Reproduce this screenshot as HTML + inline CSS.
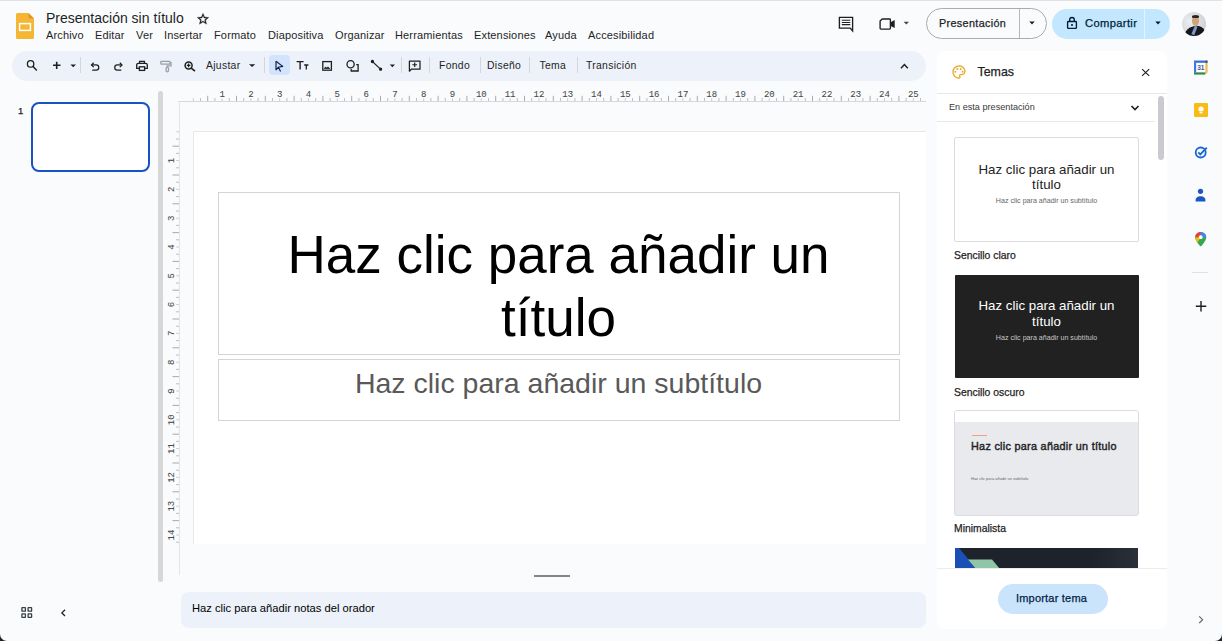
<!DOCTYPE html>
<html><head><meta charset="utf-8">
<style>
html,body{margin:0;padding:0;}
html{background:#1b2430;}
body{width:1222px;height:641px;position:relative;overflow:hidden;background:#f9fbfd;font-family:"Liberation Sans",sans-serif;color:#1f1f1f;border-radius:0 0 7px 7px;}
.a{position:absolute;white-space:nowrap;line-height:1;}
svg{position:absolute;display:block;}
#topline{position:absolute;left:0;top:0;width:1222px;height:1px;background:#dfe1e3;}
.menu{font-size:11px;letter-spacing:0.15px;color:#1f1f1f;}
.tb{font-size:10.4px;letter-spacing:0.3px;color:#1f1f1f;}
.div{position:absolute;width:1px;background:#d3d7dc;}
.med{-webkit-text-stroke:0.25px currentColor;}
</style></head><body>
<div id="topline"></div>

<!-- logo -->
<svg style="left:16px;top:13px" width="18" height="26" viewBox="0 0 18 26">
  <path d="M1.5 0h11L18 5.5V24.5a1.5 1.5 0 0 1-1.5 1.5H1.5A1.5 1.5 0 0 1 0 24.5V1.5A1.5 1.5 0 0 1 1.5 0z" fill="#f5b634"/>
  <path d="M12.5 0L18 5.5h-4a1.5 1.5 0 0 1-1.5-1.5z" fill="#e0962a"/>
  <rect x="3.6" y="10.6" width="10.8" height="6.8" fill="none" stroke="#fff" stroke-width="1.5"/>
</svg>

<div class="a" style="left:46px;top:11px;font-size:14px;color:#1f1f1f">Presentación sin título</div>
<!-- star -->
<svg style="left:195.5px;top:11.8px" width="14" height="14" viewBox="0 0 24 24"><path d="M22 9.24l-7.19-.62L12 2 9.19 8.63 2 9.24l5.46 4.73L5.82 21 12 17.27 18.18 21l-1.63-7.03L22 9.24zM12 15.4l-3.76 2.27 1-4.28-3.32-2.88 4.38-.38L12 6.1l1.71 4.04 4.38.38-3.32 2.88 1 4.28L12 15.4z" fill="#1f1f1f" stroke="#1f1f1f" stroke-width="0.5"/></svg>

<div class="a menu" style="left:46px;top:29.6px">Archivo</div>
<div class="a menu" style="left:95px;top:29.6px">Editar</div>
<div class="a menu" style="left:136px;top:29.6px">Ver</div>
<div class="a menu" style="left:164px;top:29.6px">Insertar</div>
<div class="a menu" style="left:214px;top:29.6px">Formato</div>
<div class="a menu" style="left:268px;top:29.6px">Diapositiva</div>
<div class="a menu" style="left:335px;top:29.6px">Organizar</div>
<div class="a menu" style="left:395px;top:29.6px">Herramientas</div>
<div class="a menu" style="left:474px;top:29.6px">Extensiones</div>
<div class="a menu" style="left:545px;top:29.6px">Ayuda</div>
<div class="a menu" style="left:588px;top:29.6px">Accesibilidad</div>

<!-- top right -->
<svg style="left:0;top:0" width="1222" height="641" viewBox="0 0 1222 641" fill="none">
  <path d="M839.4 17.3H852.6V31L850.2 28.1H839.4Z" stroke="#1f1f1f" stroke-width="1.35" stroke-linejoin="miter"/>
  <path d="M841.8 20.3H850.3M841.8 22.5H850.3M841.8 24.6H850.3" stroke="#1f1f1f" stroke-width="1.1"/>
  <path d="M882.2 19H889.6A0.8 0.8 0 0 1 890.4 19.8V28.3A0.8 0.8 0 0 1 889.6 29.1H880.9A0.8 0.8 0 0 1 880.1 28.3V21.1Z" stroke="#1f1f1f" stroke-width="1.35" stroke-linejoin="round"/>
  <path d="M890.6 22.3L894.7 20.1V28.1L890.6 25.9Z" fill="#1f1f1f"/>
  <path d="M903.6 21.8h5.4l-2.7 2.8z" fill="#444746"/>
</svg>
<div style="position:absolute;left:926px;top:8px;width:119px;height:29px;border:1px solid #a9acaa;border-radius:16px;box-sizing:content-box"></div>
<div style="position:absolute;left:1019px;top:9px;width:1px;height:29px;background:#b5b8b6"></div>
<div class="a med" style="left:939px;top:17.6px;font-size:10.8px;letter-spacing:0.35px;color:#1f1f1f">Presentación</div>
<svg style="left:1028px;top:20px" width="8" height="6" viewBox="0 0 8 6"><path d="M1.3 1.5h5.4L4 4.4z" fill="#1f1f1f"/></svg>

<div style="position:absolute;left:1052px;top:8.5px;width:118px;height:30px;background:#c2e7ff;border-radius:15px"></div>
<div style="position:absolute;left:1144px;top:8.5px;width:1px;height:30px;background:#e3f2fd"></div>
<svg style="left:1066px;top:16px" width="12" height="14" viewBox="0 0 12 14">
  <rect x="1.6" y="5.5" width="8.8" height="6.9" rx="0.7" fill="none" stroke="#001d35" stroke-width="1.35"/>
  <path d="M3.7 5.5V3.8a2.3 2.3 0 0 1 4.6 0v1.7" fill="none" stroke="#001d35" stroke-width="1.35"/>
  <circle cx="6" cy="9" r="1.05" fill="#001d35"/>
</svg>
<div class="a med" style="left:1085px;top:17.9px;font-size:11.2px;letter-spacing:0.35px;color:#001d35">Compartir</div>
<svg style="left:1153.5px;top:20px" width="8" height="6" viewBox="0 0 8 6"><path d="M1.3 1.5h5.4L4 4.4z" fill="#001d35"/></svg>

<!-- avatar -->
<div style="position:absolute;left:1182.3px;top:11.6px;width:24px;height:24px;border-radius:50%;overflow:hidden;background:radial-gradient(circle at 35% 40%,#eceef0 0,#d3d5d9 65%,#b8bbc0 100%)">
  <div style="position:absolute;left:3px;top:14.5px;width:20px;height:14px;border-radius:50% 50% 0 0;background:#14181e;transform:rotate(-12deg)"></div>
  <div style="position:absolute;left:10.8px;top:14.2px;width:3.2px;height:9px;background:#7d98c4;transform:rotate(22deg)"></div>
  <div style="position:absolute;left:9.8px;top:4.4px;width:7px;height:9.6px;border-radius:48% 48% 50% 50%;background:#cfa67c"></div>
  <div style="position:absolute;left:9.6px;top:3.4px;width:7.4px;height:3.2px;border-radius:50% 50% 25% 25%;background:#2a231f"></div>
</div>
<!-- toolbar -->
<div style="position:absolute;left:12px;top:51px;width:914px;height:30px;background:#edf2fa;border-radius:15px"></div>
<div style="position:absolute;left:268.5px;top:55px;width:21px;height:19.5px;background:#d3e3fd;border-radius:4px"></div>

<div id="tbicons"><svg style="left:0;top:0" width="1222" height="641" viewBox="0 0 1222 641" fill="none" stroke="#1f1f1f" stroke-width="1.5">
<!-- search -->
<circle cx="30.6" cy="63.9" r="3.2" stroke-width="1.3"/>
<path d="M32.9 66.3L36.8 70.5" stroke-width="1.4"/>
<!-- plus -->
<path d="M56.7 61.7V68.9M53 65.3H60.5" stroke-width="1.6"/>
<path d="M70.4 64.6h5.6l-2.8 2.6z" fill="#1f1f1f" stroke="none"/>
<!-- undo -->
<path d="M91.6 64.9H96.2a2.55 2.55 0 0 1 0 5.1H92.2" stroke-width="1.25"/>
<path d="M93.7 62.7L91.5 64.9L93.7 67.1" stroke-width="1.25"/>
<!-- redo -->
<path d="M121.9 64.9H117.3a2.55 2.55 0 0 0 0 5.1H121.3" stroke-width="1.25"/>
<path d="M119.8 62.7L122 64.9L119.8 67.1" stroke-width="1.25"/>
<!-- print -->
<path d="M139.6 63.3V61.3H144.4V63.3" stroke-width="1.3"/>
<path d="M139.4 68.3H136.7V65.1A1.8 1.8 0 0 1 138.5 63.3H145.5A1.8 1.8 0 0 1 147.3 65.1V68.3H144.6" stroke-width="1.3"/>
<rect x="139.4" y="66.8" width="5.2" height="3.6" stroke-width="1.3"/>
<!-- paint format -->
<g stroke="#9aa0a6" stroke-width="1.3">
<rect x="160.8" y="61.3" width="9.2" height="2.8" rx="0.6"/>
<path d="M170 62.7H171V65.8H167.3V67.2"/>
<rect x="166.1" y="67.2" width="2.4" height="4.6" rx="1.2"/>
</g>
<!-- zoom in -->
<circle cx="188.6" cy="65.4" r="3.5" stroke-width="1.5"/>
<path d="M191.2 68.1L195 71.2" stroke-width="1.6"/>
<path d="M188.6 63.6V67.2M186.8 65.4H190.4" stroke-width="1.3"/>
<path d="M249 64.3h6.2l-3.1 2.6z" fill="#1f1f1f" stroke="none"/>
<!-- cursor -->
<path d="M276 61.3V69.8L278.4 67.2L280.6 71.6M278.4 67.2L282.7 66.4Z" stroke="#041e49" stroke-width="1.15" stroke-linejoin="round"/>
<path d="M276 61.3L282.7 66.4" stroke="#041e49" stroke-width="1.15"/>
<!-- Tt -->
<path d="M296.6 61.6H303.6M300.1 61.6V69.6" stroke-width="1.4"/>
<path d="M304.2 65H308.4M306.3 65V69.6" stroke-width="1.3"/>
<!-- image -->
<rect x="322.8" y="61.6" width="8.6" height="8.6" stroke-width="1.3"/>
<path d="M324.3 68.5L325.6 67L326.8 68.1L327.8 66.9L329.8 68.5Z" fill="#1f1f1f" stroke-width="0.8"/>
<!-- shape -->
<circle cx="350.6" cy="64.2" r="3.6" stroke-width="1.3"/>
<path d="M356.3 64.6H358.1V71H351.2V68.9" stroke-width="1.3"/>
<!-- line -->
<path d="M372.5 61.6L380.5 69.1" stroke-width="1.25"/>
<circle cx="372.4" cy="61.5" r="0.9" fill="#1f1f1f"/>
<circle cx="380.6" cy="69.2" r="0.9" fill="#1f1f1f"/>
<path d="M389.8 64.6h5.2l-2.6 2.6z" fill="#1f1f1f" stroke="none"/>
<!-- comment add -->
<path d="M409.4 71.2V61H420V69.2H411.4Z" stroke-width="1.25" stroke-linejoin="round"/>
<path d="M414.7 62.4V67.1M412.35 64.75H417.05" stroke-width="1.2"/>
<!-- collapse chevron -->
<path d="M901 68.2L904.4 64.6L907.8 68.2" stroke-width="1.5"/>
</svg>
</div>

<div class="div" style="left:80px;top:57px;height:16px"></div>
<div class="div" style="left:264px;top:57px;height:16px"></div>
<div class="div" style="left:401px;top:57px;height:16px"></div>
<div class="div" style="left:429px;top:57px;height:16px"></div>
<div class="div" style="left:480px;top:57px;height:16px"></div>
<div class="div" style="left:529px;top:57px;height:16px"></div>
<div class="div" style="left:577px;top:57px;height:16px"></div>

<div class="a tb" style="left:206px;top:61px">Ajustar</div>
<div class="a tb" style="left:439px;top:61px">Fondo</div>
<div class="a tb" style="left:487px;top:61px">Diseño</div>
<div class="a tb" style="left:539.5px;top:61px">Tema</div>
<div class="a tb" style="left:586px;top:61px">Transición</div>

<!-- filmstrip -->
<div class="a med" style="left:18px;top:106.4px;font-size:9.6px;color:#1f1f1f">1</div>
<div style="position:absolute;left:31px;top:102px;width:114.5px;height:65.5px;border:2px solid #1a52c2;border-radius:8px;background:#fff"></div>
<div style="position:absolute;left:158px;top:90.5px;width:5px;height:491px;background:#d6d7d9;border-radius:3px"></div>

<!-- canvas -->
<div style="position:absolute;left:193px;top:131px;width:733px;height:412.5px;background:#fff;border-top:1px solid #e8e8e8;border-left:1px solid #e8e8e8;box-sizing:border-box"></div>
<div id="ruler"><svg style="left:0;top:0" width="1222" height="641" viewBox="0 0 1222 641">
<rect x="178" y="101" width="748" height="1" fill="#d5d8dc"/>
<rect x="179" y="101" width="1" height="474" fill="#e3e5e8"/>
<path d="M200.50 98V101 M214.90 98V101 M229.30 98V101 M243.70 98V101 M258.10 98V101 M272.50 98V101 M286.90 98V101 M301.30 98V101 M315.70 98V101 M330.10 98V101 M344.50 98V101 M358.90 98V101 M373.30 98V101 M387.70 98V101 M402.10 98V101 M416.50 98V101 M430.90 98V101 M445.30 98V101 M459.70 98V101 M474.10 98V101 M488.50 98V101 M502.90 98V101 M517.30 98V101 M531.70 98V101 M546.10 98V101 M560.50 98V101 M574.90 98V101 M589.30 98V101 M603.70 98V101 M618.10 98V101 M632.50 98V101 M646.90 98V101 M661.30 98V101 M675.70 98V101 M690.10 98V101 M704.50 98V101 M718.90 98V101 M733.30 98V101 M747.70 98V101 M762.10 98V101 M776.50 98V101 M790.90 98V101 M805.30 98V101 M819.70 98V101 M834.10 98V101 M848.50 98V101 M862.90 98V101 M877.30 98V101 M891.70 98V101 M906.10 98V101 M920.50 98V101 M176 139.00H179 M176 153.40H179 M176 167.80H179 M176 182.20H179 M176 196.60H179 M176 211.00H179 M176 225.40H179 M176 239.80H179 M176 254.20H179 M176 268.60H179 M176 283.00H179 M176 297.40H179 M176 311.80H179 M176 326.20H179 M176 340.60H179 M176 355.00H179 M176 369.40H179 M176 383.80H179 M176 398.20H179 M176 412.60H179 M176 427.00H179 M176 441.40H179 M176 455.80H179 M176 470.20H179 M176 484.60H179 M176 499.00H179 M176 513.40H179 M176 527.80H179 M176 542.20H179" stroke="#b4b8bc" stroke-width="0.9" fill="none"/>
<path d="M207.70 95.8V101 M236.50 95.8V101 M265.30 95.8V101 M294.10 95.8V101 M322.90 95.8V101 M351.70 95.8V101 M380.50 95.8V101 M409.30 95.8V101 M438.10 95.8V101 M466.90 95.8V101 M495.70 95.8V101 M524.50 95.8V101 M553.30 95.8V101 M582.10 95.8V101 M610.90 95.8V101 M639.70 95.8V101 M668.50 95.8V101 M697.30 95.8V101 M726.10 95.8V101 M754.90 95.8V101 M783.70 95.8V101 M812.50 95.8V101 M841.30 95.8V101 M870.10 95.8V101 M898.90 95.8V101 M172.5 146.20H179 M172.5 175.00H179 M172.5 203.80H179 M172.5 232.60H179 M172.5 261.40H179 M172.5 290.20H179 M172.5 319.00H179 M172.5 347.80H179 M172.5 376.60H179 M172.5 405.40H179 M172.5 434.20H179 M172.5 463.00H179 M172.5 491.80H179 M172.5 520.60H179" stroke="#9ca1a6" stroke-width="0.9" fill="none"/>
<path d="M193.30 98.2V101 M222.10 98.2V101 M250.90 98.2V101 M279.70 98.2V101 M308.50 98.2V101 M337.30 98.2V101 M366.10 98.2V101 M394.90 98.2V101 M423.70 98.2V101 M452.50 98.2V101 M481.30 98.2V101 M510.10 98.2V101 M538.90 98.2V101 M567.70 98.2V101 M596.50 98.2V101 M625.30 98.2V101 M654.10 98.2V101 M682.90 98.2V101 M711.70 98.2V101 M740.50 98.2V101 M769.30 98.2V101 M798.10 98.2V101 M826.90 98.2V101 M855.70 98.2V101 M884.50 98.2V101 M913.30 98.2V101 M176.2 131.80H179 M176.2 160.60H179 M176.2 189.40H179 M176.2 218.20H179 M176.2 247.00H179 M176.2 275.80H179 M176.2 304.60H179 M176.2 333.40H179 M176.2 362.20H179 M176.2 391.00H179 M176.2 419.80H179 M176.2 448.60H179 M176.2 477.40H179 M176.2 506.20H179 M176.2 535.00H179" stroke="#c5c8cc" stroke-width="0.9" fill="none"/>
<g font-family="Liberation Mono" font-size="9" fill="#444746" stroke="#444746" stroke-width="0.05"><text x="222.10" y="96.9" text-anchor="middle">1</text><text x="250.90" y="96.9" text-anchor="middle">2</text><text x="279.70" y="96.9" text-anchor="middle">3</text><text x="308.50" y="96.9" text-anchor="middle">4</text><text x="337.30" y="96.9" text-anchor="middle">5</text><text x="366.10" y="96.9" text-anchor="middle">6</text><text x="394.90" y="96.9" text-anchor="middle">7</text><text x="423.70" y="96.9" text-anchor="middle">8</text><text x="452.50" y="96.9" text-anchor="middle">9</text><text x="481.30" y="96.9" text-anchor="middle">10</text><text x="510.10" y="96.9" text-anchor="middle">11</text><text x="538.90" y="96.9" text-anchor="middle">12</text><text x="567.70" y="96.9" text-anchor="middle">13</text><text x="596.50" y="96.9" text-anchor="middle">14</text><text x="625.30" y="96.9" text-anchor="middle">15</text><text x="654.10" y="96.9" text-anchor="middle">16</text><text x="682.90" y="96.9" text-anchor="middle">17</text><text x="711.70" y="96.9" text-anchor="middle">18</text><text x="740.50" y="96.9" text-anchor="middle">19</text><text x="769.30" y="96.9" text-anchor="middle">20</text><text x="798.10" y="96.9" text-anchor="middle">21</text><text x="826.90" y="96.9" text-anchor="middle">22</text><text x="855.70" y="96.9" text-anchor="middle">23</text><text x="884.50" y="96.9" text-anchor="middle">24</text><text x="913.30" y="96.9" text-anchor="middle">25</text><text transform="translate(174 160.60) rotate(-90)" text-anchor="middle">1</text><text transform="translate(174 189.40) rotate(-90)" text-anchor="middle">2</text><text transform="translate(174 218.20) rotate(-90)" text-anchor="middle">3</text><text transform="translate(174 247.00) rotate(-90)" text-anchor="middle">4</text><text transform="translate(174 275.80) rotate(-90)" text-anchor="middle">5</text><text transform="translate(174 304.60) rotate(-90)" text-anchor="middle">6</text><text transform="translate(174 333.40) rotate(-90)" text-anchor="middle">7</text><text transform="translate(174 362.20) rotate(-90)" text-anchor="middle">8</text><text transform="translate(174 391.00) rotate(-90)" text-anchor="middle">9</text><text transform="translate(174 419.80) rotate(-90)" text-anchor="middle">10</text><text transform="translate(174 448.60) rotate(-90)" text-anchor="middle">11</text><text transform="translate(174 477.40) rotate(-90)" text-anchor="middle">12</text><text transform="translate(174 506.20) rotate(-90)" text-anchor="middle">13</text><text transform="translate(174 535.00) rotate(-90)" text-anchor="middle">14</text></g>
</svg></div>

<!-- slide boxes -->
<div style="position:absolute;left:217.5px;top:191.5px;width:682px;height:163.5px;border:1px solid #d4d4d4;box-sizing:border-box"></div>
<div style="position:absolute;left:217.5px;top:358.5px;width:682px;height:62.5px;border:1px solid #d4d4d4;box-sizing:border-box"></div>
<div class="a" style="left:217.5px;width:682px;text-align:center;top:227.5px;font-size:53px;color:#000">Haz clic para añadir un</div>
<div class="a" style="left:217.5px;width:682px;text-align:center;top:291px;font-size:53px;color:#000">título</div>
<div class="a" style="left:217.5px;width:682px;text-align:center;top:368.8px;font-size:28.5px;color:#595959">Haz clic para añadir un subtítulo</div>

<!-- handle -->
<div style="position:absolute;left:534px;top:575px;width:36px;height:2px;background:#80868b"></div>

<!-- notes -->
<div style="position:absolute;left:180.5px;top:592px;width:745px;height:35.5px;background:#edf2fa;border-radius:8px"></div>
<div class="a" style="left:192px;top:602.5px;font-size:11.2px;color:#000">Haz clic para añadir notas del orador</div>

<!-- bottom left icons -->
<div id="bl"></div>

<!-- side panel -->
<div style="position:absolute;left:937px;top:50.5px;width:230px;height:578.5px;background:#fff;border-radius:8px;overflow:hidden">
</div>
<div id="panel"><div style="position:absolute;left:937px;top:93px;width:230px;height:1px;background:#e8e8e8"></div>
<svg style="left:951px;top:64px" width="16" height="16" viewBox="0 0 24 24"><path fill="#e6ac2c" d="M12 22C6.49 22 2 17.510 2 12S6.49 2 12 2s10 4.04 10 9c0 3.31-2.69 6-6 6h-1.77c-.28 0-.5.22-.5.5 0 .12.05.23.13.33.41.47.64 1.06.64 1.67 0 1.38-1.12 2.5-2.5 2.5zm0-18c-4.41 0-8 3.590-8 8s3.59 8 8 8c.28 0 .5-.22.5-.5 0-.16-.08-.28-.14-.35-.41-.46-.63-1.05-.63-1.65 0-1.38 1.12-2.5 2.5-2.5H16c2.21 0 4-1.79 4-4 0-3.86-3.59-7-8-7z"/><circle fill="#e6ac2c" cx="6.5" cy="11.5" r="1.5"/><circle fill="#e6ac2c" cx="9.5" cy="7.5" r="1.5"/><circle fill="#e6ac2c" cx="14.5" cy="7.5" r="1.5"/><circle fill="#e6ac2c" cx="17.5" cy="11.5" r="1.5"/></svg>
<div class="a med" style="left:977.5px;top:65.8px;font-size:12.4px;color:#1f1f1f">Temas</div>
<svg style="left:1140px;top:67px" width="12" height="12" viewBox="0 0 12 12"><path d="M2.1 2.1L9.2 8.9M9.2 2.1L2.1 8.9" stroke="#1f1f1f" stroke-width="1.15"/></svg>
<div class="a" style="left:949px;top:102.5px;font-size:9.15px;color:#3a3a3a">En esta presentación</div>
<svg style="left:1129px;top:103px" width="12" height="10" viewBox="0 0 12 10"><path d="M2.5 3L6 6.6L9.5 3" fill="none" stroke="#1f1f1f" stroke-width="1.6"/></svg>
<div style="position:absolute;left:937px;top:121px;width:218px;height:1px;background:#e8e8e8"></div>
<div style="position:absolute;left:1158px;top:96px;width:5.5px;height:64px;background:#c9cbd0;border-radius:3px"></div>

<!-- card 1 -->
<div style="position:absolute;left:954px;top:137px;width:185px;height:104.5px;box-sizing:border-box;border:1px solid #dadce0;border-radius:2px;background:#fff"></div>
<div class="a" style="left:954px;width:185px;text-align:center;top:161.8px;font-size:13.3px;color:#222;line-height:15.1px">Haz clic para añadir un<br>título</div>
<div class="a" style="left:954px;width:185px;text-align:center;top:198.3px;font-size:7.1px;color:#666">Haz clic para añadir un subtítulo</div>
<div class="a med" style="left:954px;top:251px;font-size:10.4px;color:#1f1f1f">Sencillo claro</div>

<!-- card 2 -->
<div style="position:absolute;left:954.5px;top:274.5px;width:184px;height:103px;background:#212121;border-radius:1px"></div>
<div class="a" style="left:954px;width:185px;text-align:center;top:298.3px;font-size:13.3px;color:#fff;line-height:15.3px">Haz clic para añadir un<br>título</div>
<div class="a" style="left:954px;width:185px;text-align:center;top:334.8px;font-size:7.1px;color:#c8c8c8">Haz clic para añadir un subtítulo</div>
<div class="a med" style="left:954px;top:387.8px;font-size:10.4px;color:#1f1f1f">Sencillo oscuro</div>

<!-- card 3 -->
<div style="position:absolute;left:954px;top:410px;width:185px;height:105.5px;box-sizing:border-box;border:1px solid #dadce0;border-radius:3px;background:#e8eaed;overflow:hidden">
 <div style="position:absolute;left:0;top:0;width:185px;height:10.5px;background:#fff"></div>
</div>
<div style="position:absolute;left:971.5px;top:435px;width:15px;height:1px;background:#f0a27e"></div>
<div class="a" style="left:971px;top:440.6px;font-size:10.8px;letter-spacing:0.3px;-webkit-text-stroke:0.4px #202124;color:#202124">Haz clic para añadir un título</div>
<div class="a" style="left:971px;top:477px;font-size:4px;color:#5f6368">Haz clic para añadir un subtítulo</div>
<div class="a med" style="left:954px;top:524.2px;font-size:10.4px;color:#1f1f1f">Minimalista</div>

<!-- card 4 (clipped) -->
<div style="position:absolute;left:955px;top:548px;width:183px;height:20.5px;background:#1e222b;overflow:hidden">
 <svg style="left:0;top:0" width="183" height="21" viewBox="0 0 183 21">
  <defs><linearGradient id="g4" x1="0" x2="1"><stop offset="0.75" stop-color="#1e222b"/><stop offset="1" stop-color="#2a2f38"/></linearGradient></defs>
  <rect width="183" height="21" fill="url(#g4)"/>
  <path d="M0 0H4L21.5 21H0Z" fill="#1a4fb5"/>
  <path d="M13 11.5H37L45 21H21Z" fill="#8fc6a7"/>
 </svg>
</div>
<div style="position:absolute;left:937px;top:568px;width:230px;height:1px;background:#ececec"></div>

<div style="position:absolute;left:997.5px;top:584px;width:110px;height:30px;background:#c9e4fb;border-radius:15px"></div>
<div class="a med" style="left:1016px;top:592.9px;font-size:11px;letter-spacing:0.2px;color:#041e49">Importar tema</div>
</div>

<!-- right addon bar -->
<div id="addons"><svg style="left:0;top:0" width="1222" height="641" viewBox="0 0 1222 641" fill="none">
<!-- calendar -->
<rect x="1194" y="60.5" width="11.2" height="2.4" fill="#3a6fdc"/>
<rect x="1205.2" y="60.5" width="2.4" height="2.4" fill="#223f8c"/>
<rect x="1194" y="62.9" width="2.4" height="9.3" fill="#3b77e6"/>
<rect x="1194" y="72.2" width="11.2" height="2.4" fill="#2f8c4a"/>
<rect x="1205.2" y="62.9" width="2.4" height="9.3" fill="#f0bb48"/>
<path d="M1205.2 72.2H1207.6L1205.2 74.6Z" fill="#d9a338"/>
<rect x="1196.4" y="62.9" width="8.8" height="9.3" fill="#fff"/>
<text x="1200.8" y="70.4" font-family="Liberation Sans" font-size="6.6" fill="#44569c" text-anchor="middle" font-weight="bold">31</text>
<!-- keep -->
<rect x="1194" y="103" width="14" height="14" rx="1.2" fill="#f9bc15"/>
<circle cx="1201" cy="109" r="2.6" fill="#fff"/>
<rect x="1199.6" y="112" width="2.8" height="1.4" fill="#fff"/>
<!-- tasks -->
<circle cx="1200.7" cy="152.5" r="5" stroke="#1967d2" stroke-width="1.8"/>
<path d="M1198.2 152.4L1200.3 154.4L1206.8 147.6" stroke="#1967d2" stroke-width="1.8"/>
<!-- contacts -->
<circle cx="1200.5" cy="191.3" r="2.6" fill="#1a56c4"/>
<path d="M1195.6 201.5v-1.6c0-2.1 2.4-3.6 4.9-3.6s4.9 1.5 4.9 3.6v1.6z" fill="#1a56c4"/>
<!-- maps -->
<path d="M1200.7 232C1197.6 232 1195.2 234.4 1195.2 237.4C1195.2 241.3 1200.7 246.5 1200.7 246.5C1200.7 246.5 1206.2 241.3 1206.2 237.4C1206.2 234.4 1203.8 232 1200.7 232Z" fill="#34a853"/>
<path d="M1200.7 232C1197.6 232 1195.2 234.4 1195.2 237.4L1200.7 237.4Z" fill="#ea4335"/>
<path d="M1200.7 232C1203.8 232 1206.2 234.4 1206.2 237.4L1200.7 237.4Z" fill="#4285f4"/>
<path d="M1195.2 237.4C1195.2 239 1196.2 240.8 1197.4 242.4L1200.7 237.4Z" fill="#fbbc04"/>
<circle cx="1200.7" cy="237.2" r="1.9" fill="#fff"/>
<!-- divider -->
<rect x="1192" y="272" width="16" height="1" fill="#dfe1e5"/>
<!-- plus -->
<path d="M1201 301V311.5M1195.8 306.2H1206.3" stroke="#1f1f1f" stroke-width="1.4"/>
<!-- chevron right -->
<path d="M1199.2 616.3L1202.6 619.7L1199.2 623.1" stroke="#5f6368" stroke-width="1.2"/>
<!-- bottom left grid -->
<g stroke="#3c4043" stroke-width="1.3">
<rect x="21.9" y="607.7" width="3.5" height="3.5" rx="0.3"/>
<rect x="28.1" y="607.7" width="3.5" height="3.5" rx="0.3"/>
<rect x="21.9" y="613.9" width="3.5" height="3.5" rx="0.3"/>
<rect x="28.1" y="613.9" width="3.5" height="3.5" rx="0.3"/>
</g>
<path d="M65 609.8L61.9 612.9L65 616" stroke="#1f1f1f" stroke-width="1.3"/>
</svg>
</div>

</body></html>
